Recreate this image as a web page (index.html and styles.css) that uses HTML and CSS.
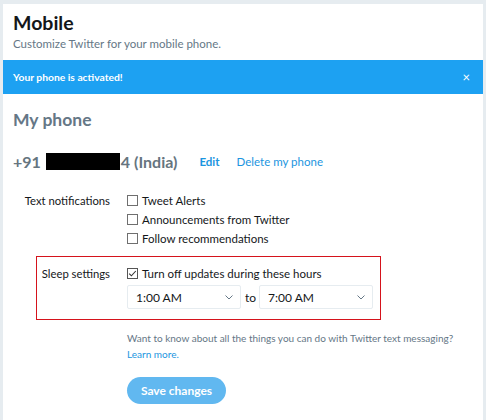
FILE: index.html
```html
<!DOCTYPE html>
<html>
<head>
<meta charset="utf-8">
<link rel="stylesheet" href="styles.css">
</head>
<body>
<div class="card">
  <div class="header">
    <h1 class="title">Mobile</h1>
    <p class="subtitle">Customize Twitter for your mobile phone.</p>
  </div>
  <div class="banner">
    <span class="banner-text">Your phone is activated!</span>
    <span class="banner-close">×</span>
  </div>
  <div class="content">
    <h2 class="section-title">My phone</h2>
    <div class="phone-row">
      <span class="phone"><span>+91</span><span class="redact"></span><span>4 (India)</span></span>
      <a class="link bold edit">Edit</a>
      <a class="link">Delete my phone</a>
    </div>
    <div class="row">
      <div class="label">Text notifications</div>
      <div class="controls">
        <label class="check"><span class="box"></span>Tweet Alerts</label>
        <label class="check"><span class="box"></span>Announcements from Twitter</label>
        <label class="check"><span class="box"></span>Follow recommendations</label>
      </div>
    </div>
    <div class="sleep-box">
      <div class="label">Sleep settings</div>
      <div class="controls">
        <label class="check"><span class="box checked"><svg viewBox="0 0 11 11" width="11" height="11"><path d="M2.2 5.6 L4.4 7.8 L8.8 3" fill="none" stroke="#333" stroke-width="1.1"/></svg></span>Turn off updates during these hours</label>
        <div class="times">
          <div class="select"><span>1:00 AM</span><svg class="chev" viewBox="0 0 8 5" width="8" height="5"><path d="M0.5 0.5 L4 4 L7.5 0.5" fill="none" stroke="#657786" stroke-width="1"/></svg></div>
          <span class="to">to</span>
          <div class="select"><span>7:00 AM</span><svg class="chev" viewBox="0 0 8 5" width="8" height="5"><path d="M0.5 0.5 L4 4 L7.5 0.5" fill="none" stroke="#657786" stroke-width="1"/></svg></div>
        </div>
      </div>
    </div>
    <div class="after">
      <p class="help">Want to know about all the things you can do with Twitter text messaging?<br><a class="link small">Learn more.</a></p>
      <button class="save">Save changes</button>
    </div>
  </div>
</div>
</body>
</html>
```

FILE: styles.css
```css
* { box-sizing: border-box; }
body {
  margin: 0;
  background: #e6ecf0;
  font-family: Lato, "Open Sans", sans-serif;
  color: #14171a;
}
.card {
  margin: 4px 3px 0;
  background: #fff;
  height: 420px;
}
.header {
  padding: 6px 10px 0;
  height: 56px;
}
.title {
  margin: 0;
  font-size: 19.5px;
  font-weight: 700;
  line-height: 26px;
  color: #14171a;
}
.subtitle {
  margin: 0;
  font-size: 11.5px;
  line-height: 16px;
  color: #657786;
}
.banner {
  background: #1da1f2;
  height: 34px;
  display: flex;
  align-items: center;
  justify-content: space-between;
  padding: 0 13px 0 10px;
  color: #fff;
}
.banner-text {
  font-size: 10.3px;
  font-weight: 700;
}
.banner-close {
  font-size: 13px;
  line-height: 1;
}
.content {
  padding: 14px 10px 0;
}
.section-title {
  margin: 0;
  font-size: 17.5px;
  font-weight: 700;
  line-height: 24px;
  color: #657786;
}
.phone-row {
  display: flex;
  align-items: center;
  margin-top: 19px;
  height: 20px;
}
.phone {
  font-size: 16px;
  font-weight: 700;
  color: #66757f;
  display: flex;
  align-items: center;
}
.redact {
  display: inline-block;
  width: 74px;
  height: 17px;
  background: #000;
  margin: 0 1px 0 5px;
}
.link {
  color: #1b95e0;
  font-size: 11.5px;
  text-decoration: none;
}
.link.bold { font-weight: 700; }
.edit { margin-left: 22px; margin-right: 17px; }
.row {
  display: grid;
  grid-template-columns: 97px auto;
  column-gap: 17px;
  margin-top: 20px;
}
.label {
  text-align: right;
  font-size: 11.3px;
  line-height: 19px;
  color: #14171a;
}
.controls {
  display: flex;
  flex-direction: column;
}
.check {
  display: flex;
  align-items: center;
  font-size: 11.5px;
  line-height: 19px;
  color: #14171a;
}
.box {
  width: 11px;
  height: 11px;
  border: 1px solid #6f6f6f;
  margin-right: 4px;
  display: inline-flex;
  align-items: center;
  justify-content: center;
  flex: none;
}
.box.checked { border-color: #555; }
.box svg { display: block; margin: -1px; }
.sleep-box {
  display: grid;
  grid-template-columns: 73px auto;
  column-gap: 17px;
  width: 345px;
  margin: 8px 0 0 23px;
  border: 1px solid #d5131c;
  padding: 7px 7px 10px 0;
}
.times {
  display: flex;
  align-items: center;
  margin-top: 2px;
}
.select {
  width: 114px;
  height: 24px;
  border: 1px solid #e6ecf0;
  border-radius: 2px;
  display: flex;
  align-items: center;
  justify-content: space-between;
  padding: 0 7px 0 8px;
  font-size: 12px;
  color: #14171a;
}
.to {
  font-size: 12px;
  margin: 0 3px 0 4px;
  color: #14171a;
}
.after {
  padding-left: 114px;
}
.help {
  margin: 10px 0 0;
  font-size: 10px;
  line-height: 16px;
  color: #657786;
  white-space: nowrap;
}
.link.small { font-size: 10px; }
.save {
  margin-top: 15px;
  width: 99px;
  height: 27px;
  border: none;
  border-radius: 14px;
  background: #61b8f0;
  color: #fff;
  font-family: inherit;
  font-size: 12px;
  font-weight: 700;
  padding: 0;
}
```
